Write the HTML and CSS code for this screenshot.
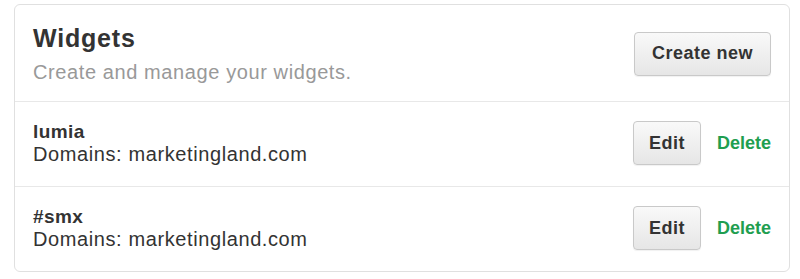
FILE: index.html
```html
<!DOCTYPE html>
<html lang="en">
<head>
    <meta charset="UTF-8">
    <title>Widgets</title>
    <link rel="stylesheet" href="styles.css">
</head>
<body>
    <div class="painel">
        <div class="cabecalho">
            <div class="titulos">
                <h1 class="titulo">Widgets</h1>
                <p class="subtitulo">Create and manage your widgets.</p>
            </div>
            <button class="botao botao-criar">Create new</button>
        </div>
        <div class="linha">
            <div class="info">
                <div class="nome">lumia</div>
                <div class="dominios">Domains: marketingland.com</div>
            </div>
            <div class="acoes">
                <button class="botao">Edit</button>
                <a href="#" class="apagar">Delete</a>
            </div>
        </div>
        <div class="linha">
            <div class="info">
                <div class="nome">#smx</div>
                <div class="dominios">Domains: marketingland.com</div>
            </div>
            <div class="acoes">
                <button class="botao">Edit</button>
                <a href="#" class="apagar">Delete</a>
            </div>
        </div>
    </div>
</body>
</html>
```

FILE: styles.css
```css
body {
    margin: 0;
    background-color: white;
    color: #333;
    font-family: "Liberation Sans", Arial, sans-serif;
}
.painel {
    margin: 4px 10px 0 14px;
    border: 1px solid #e0e0e0;
    border-radius: 6px;
}
.cabecalho {
    display: flex;
    justify-content: space-between;
    align-items: center;
    padding: 18px 18px 17px 18px;
    border-bottom: 1px solid #e8e8e8;
}
.titulo {
    margin: 0;
    font-size: 25px;
    line-height: 30px;
    letter-spacing: 0.8px;
    font-weight: bold;
    color: #333;
}
.subtitulo {
    margin: 7px 0 0 0;
    font-size: 20px;
    line-height: 24px;
    letter-spacing: 0.6px;
    color: #999;
}
.linha {
    display: flex;
    justify-content: space-between;
    align-items: center;
    padding: 19px 18px 21px 18px;
}
.linha + .linha {
    border-top: 1px solid #e8e8e8;
}
.nome {
    font-size: 19px;
    line-height: 22px;
    letter-spacing: 0.4px;
    font-weight: bold;
}
.dominios {
    font-size: 20px;
    line-height: 22px;
    letter-spacing: 0.6px;
}
.acoes {
    display: flex;
    align-items: center;
}
.botao {
    height: 44px;
    padding: 0 15px;
    background: linear-gradient(#f9f9f9, #e6e6e6);
    border: 1px solid #c9c9c9;
    border-radius: 4px;
    box-shadow: 0 1px 1px rgba(0, 0, 0, 0.06);
    color: #333;
    font-family: "Liberation Sans", Arial, sans-serif;
    font-size: 18px;
    font-weight: bold;
    letter-spacing: 0.5px;
    cursor: pointer;
}
.botao-criar {
    padding: 0 17px;
}
.apagar {
    margin-left: 16px;
    color: #1f9e50;
    font-size: 18px;
    font-weight: bold;
    text-decoration: none;
}
```
